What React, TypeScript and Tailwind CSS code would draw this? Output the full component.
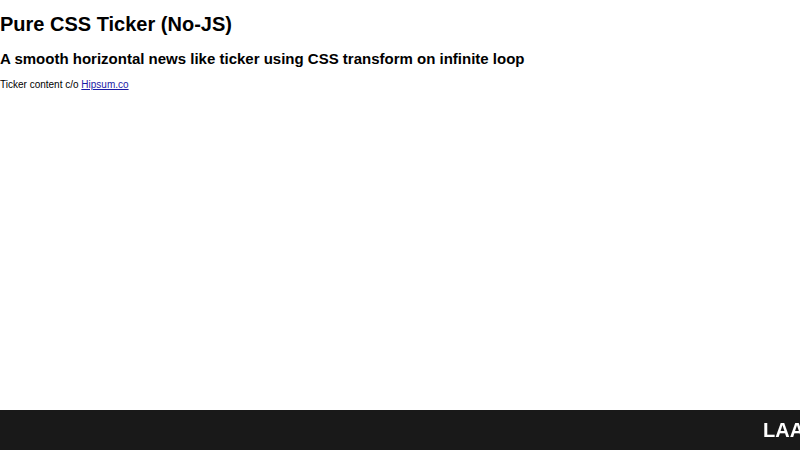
import React from 'react'

const items = [
  'LAA',
  'Letterpress chambray brunch.',
  'Vice mlkshk crucifix beard chillwave meditation hoodie asymmetrical Helvetica.',
  'Ugh PBR&B kale chips Echo Park.',
  'Gluten-free mumblecore chambray mixtape food truck.',
]

function Ticker() {
  return (
    <div className="fixed bottom-0 left-0 w-full h-[40px] overflow-hidden bg-black/90">
      {/* the strip is parked where the loop currently sits */}
      <div className="flex h-full items-center whitespace-nowrap pl-[743px]">
        {items.map((item) => (
          <div key={item} className="px-[20px] text-[20px] font-bold leading-[40px] text-white">
            {item}
          </div>
        ))}
      </div>
    </div>
  )
}

export default function App() {
  return (
    <div className="min-h-[450px] bg-white pb-[50px] text-black leading-[normal] font-['Liberation_Sans',Arial,sans-serif]">
      <h1 className="my-[13.4px] text-[20px] leading-[normal] font-bold">Pure CSS Ticker (No-JS)</h1>
      <h2 className="my-[12.45px] text-[15px] leading-[normal] font-bold">
        A smooth horizontal news like ticker using CSS transform on infinite loop
      </h2>
      <p className="my-[10px] text-[10px] leading-[normal]">
        Ticker content c/o{' '}
        <a href="#" className="text-[#1a1aa6] underline">
          Hipsum.co
        </a>
      </p>
      <Ticker />
    </div>
  )
}
